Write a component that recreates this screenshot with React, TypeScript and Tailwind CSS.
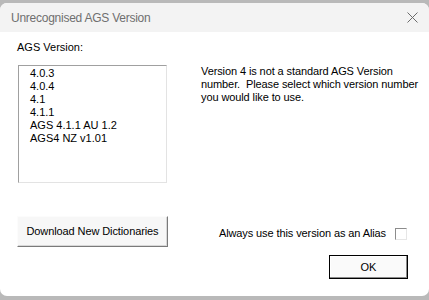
import React from 'react';

const versions = ['4.0.3', '4.0.4', '4.1', '4.1.1', 'AGS 4.1.1 AU 1.2', 'AGS4 NZ v1.01'];

function CloseIcon() {
  return (
    <svg width="11" height="11" viewBox="0 0 11 11" fill="none" stroke="#6b6b6b" strokeWidth="1">
      <path d="M0.5 0.5 L10.5 10.5 M10.5 0.5 L0.5 10.5" />
    </svg>
  );
}

export default function App() {
  return (
    <div className="w-[429px] h-[300px] bg-[#b9b9b9] overflow-hidden pt-[3px] font-['Liberation_Sans',Arial,sans-serif]">
      <div className="flex h-[293px] flex-col rounded-[7px] bg-white overflow-hidden">
        {/* Title bar */}
        <div className="flex h-[29px] shrink-0 items-center justify-between bg-[#f3f3f3] pl-[11px] pr-[11px]">
          <span className="text-[12px] text-[#6f6f6f] tracking-[-0.25px]">
            Unrecognised AGS Version
          </span>
          <CloseIcon />
        </div>

        {/* Body */}
        <div className="flex flex-1 flex-col text-[11px] text-black leading-[13px]">
          <div className="pl-[17px] pt-[9px]">AGS Version:</div>

          <div className="flex pt-[11px]">
            <div className="ml-[18px] h-[118px] w-[149px] border border-t-[#a0a0a0] border-l-[#a0a0a0] border-b-[#e3e3e3] border-r-[#e3e3e3] bg-white px-[11px] pt-[1px]">
              {versions.map((v) => (
                <div key={v} className="h-[13px] whitespace-nowrap">
                  {v}
                </div>
              ))}
            </div>
            <p className="ml-[34px] w-[226px] tracking-[-0.1px]">
              Version 4 is not a standard AGS Version<br />
              number.&nbsp; Please select which version number<br />
              you would like to use.
            </p>
          </div>

          <div className="flex items-center pt-[33px]">
            <button className="ml-[17px] h-[31px] w-[151px] border border-t-[#fcfcfc] border-l-[#fcfcfc] border-b-[#7a7a7a] border-r-[#7a7a7a] bg-[#f7f7f7] tracking-[-0.1px] shadow-[inset_-1px_-1px_0_#d8d8d8]">
              Download New Dictionaries
            </button>
            <div className="ml-auto mr-[22px] mt-[4px] flex items-center gap-[9px]">
              <span className="tracking-[-0.1px]">Always use this version as an Alias</span>
              <span className="h-[12px] w-[12px] border border-t-[#8c8c8c] border-l-[#8c8c8c] border-b-[#e6e6e6] border-r-[#e6e6e6] bg-white" />
            </div>
          </div>

          <div className="flex justify-end pt-[8px] pr-[21px]">
            <button className="h-[24px] w-[79px] border border-black bg-[#fafafa] shadow-[inset_-1px_-1px_0_#8a8a8a,inset_1px_1px_0_#ffffff]">
              OK
            </button>
          </div>
        </div>
      </div>
    </div>
  );
}
